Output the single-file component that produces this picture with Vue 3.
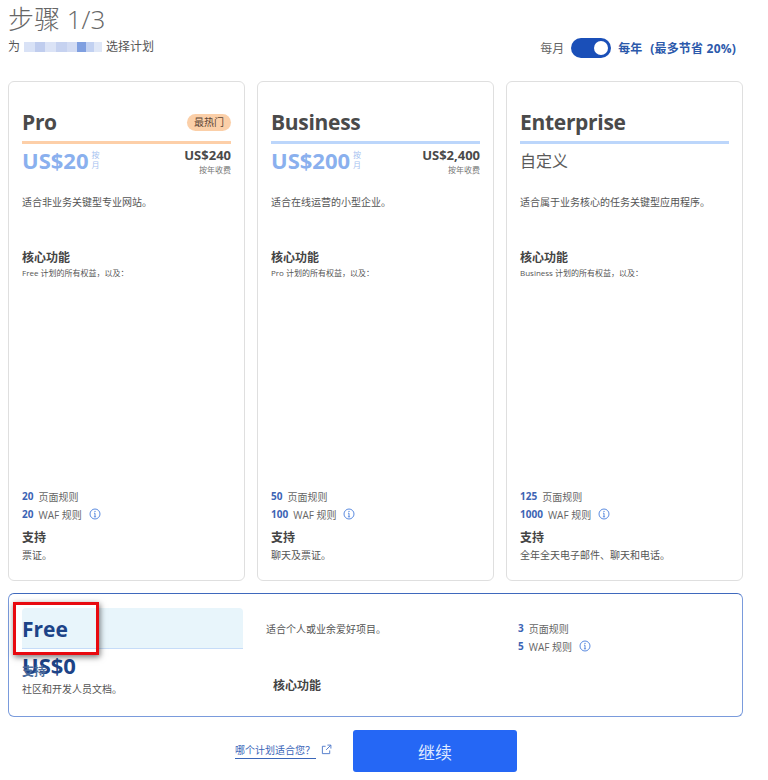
<script setup>
const plans = [
  { name: 'Pro', line: '#fdcfa8', price: 'US$20', year: 'US$240', badge: '最热门', desc: '适合非业务关键型专业网站。', inherit: 'Free 计划的所有权益\uFF0C以及\uFF1A', pages: 20, waf: 20, support: '票证。' },
  { name: 'Business', line: '#bcd6fb', price: 'US$200', year: 'US$2,400', desc: '适合在线运营的小型企业。', inherit: 'Pro 计划的所有权益\uFF0C以及\uFF1A', pages: 50, waf: 100, support: '聊天及票证。' },
  { name: 'Enterprise', line: '#bcd6fb', custom: '自定义', desc: '适合属于业务核心的任务关键型应用程序。', inherit: 'Business 计划的所有权益\uFF0C以及\uFF1A', pages: 125, waf: 1000, support: '全年全天电子邮件、聊天和电话。' }
]
const whichText = '哪个计划适合您\uFF1F'
</script>

<template>
  <div class="page">
    <header class="head">
      <div>
        <h1 class="step">步骤 1/3</h1>
        <div class="for">为 <span class="mask"></span> 选择计划</div>
      </div>
      <div class="billing">
        <span class="month">每月</span>
        <span class="switch"><span class="knob"></span></span>
        <span class="year">每年</span>
        <span class="save">(最多节省 20%)</span>
      </div>
    </header>

    <section class="plans">
      <article v-for="p in plans" :key="p.name" class="card">
        <div class="title-row" :style="{ borderColor: p.line }">
          <h2 class="name">{{ p.name }}</h2>
          <span v-if="p.badge" class="badge">{{ p.badge }}</span>
        </div>
        <div v-if="p.custom" class="custom">{{ p.custom }}</div>
        <div v-else class="price-row">
          <div class="price">{{ p.price }}<span class="per"><span>按</span><span>月</span></span></div>
          <div class="annual"><strong>{{ p.year }}</strong><small>按年收费</small></div>
        </div>
        <p class="desc">{{ p.desc }}</p>
        <h3 class="core">核心功能</h3>
        <p class="inherit">{{ p.inherit }}</p>
        <div class="bottom">
          <div class="rule"><b>{{ p.pages }}</b> 页面规则</div>
          <div class="rule"><b>{{ p.waf }}</b> WAF 规则
            <svg class="info" viewBox="0 0 12 12"><circle cx="6" cy="6" r="5" /><path d="M6 5.2v3.6M4.9 8.8h2.2M5 5.2h1" /><circle class="dot" cx="6" cy="3.4" r=".7" /></svg>
          </div>
          <h3 class="support">支持</h3>
          <p class="support-text">{{ p.support }}</p>
        </div>
      </article>
    </section>

    <section class="free">
      <div class="free-left">
        <h2 class="free-name">Free</h2>
        <div class="free-price">US$0</div>
        <h3 class="free-support">支持</h3>
        <p class="support-text">社区和开发人员文档。</p>
      </div>
      <div class="free-mid">
        <p class="free-desc">适合个人或业余爱好项目。</p>
        <h3 class="free-core">核心功能</h3>
      </div>
      <div class="free-right">
        <div class="rule"><b>3</b> 页面规则</div>
        <div class="rule"><b>5</b> WAF 规则
          <svg class="info" viewBox="0 0 12 12"><circle cx="6" cy="6" r="5" /><path d="M6 5.2v3.6M4.9 8.8h2.2M5 5.2h1" /><circle class="dot" cx="6" cy="3.4" r=".7" /></svg>
        </div>
      </div>
      <div class="marker"></div>
    </section>

    <footer class="foot">
      <a class="which">{{ whichText }}</a>
      <svg class="ext" viewBox="0 0 12 12"><path d="M5 2.5H1.5v8h8V7M7 1.2h3.8V5M10.6 1.4 5.6 6.4" /></svg>
      <button class="go">继续</button>
    </footer>
  </div>
</template>

<style>
body { margin: 0; background: #fff; }
</style>

<style scoped>
.page {
  width: 768px;
  height: 780px;
  box-sizing: border-box;
  padding: 0 25px 0 8px;
  overflow: hidden;
  font-family: "Open Sans", "Noto Sans CJK SC", sans-serif;
  color: #4a4a4a;
}
h1, h2, h3, p { margin: 0; }
.head { display: flex; justify-content: space-between; height: 81px; }
.step { font-size: 26px; line-height: 36px; font-weight: 300; color: #666; padding-top: 1px; }
.for { display: flex; align-items: center; gap: 4px; font-size: 12px; line-height: 14px; color: #555; margin-top: 3px; }
.mask {
  width: 78px;
  height: 10px;
  background: linear-gradient(90deg, #d9e2f6 0 14%, #c0cdee 14% 27%, #dbe3f6 27% 41%, #c6d2f0 41% 55%, #d3dcf3 55% 68%, #7f9fe0 68% 80%, #c2d1f1 80% 90%, #dfe7f7 90% 100%);
}
.billing { display: flex; align-items: center; gap: 5px; height: 20px; margin: 38px 7px 0 0; font-size: 12px; font-weight: 700; color: #2c59ab; }
.month { font-weight: 400; color: #666; margin-right: 2px; }
.switch { width: 40px; height: 20px; border-radius: 10px; background: #1a4fb8; position: relative; margin-right: 2px; }
.knob { position: absolute; right: 3px; top: 3px; width: 14px; height: 14px; border-radius: 50%; background: #fff; }
.save { margin-left: 3px; letter-spacing: .2px; }
.plans { display: grid; grid-template-columns: repeat(3, 237px); gap: 12px; }
.card {
  height: 500px;
  box-sizing: border-box;
  border: 1px solid #dfdfdf;
  border-radius: 6px;
  padding: 21px 13px 18px;
  display: flex;
  flex-direction: column;
}
.title-row { display: flex; justify-content: space-between; align-items: center; height: 38px; border-bottom: 3px solid; }
.name { font-size: 21px; line-height: 38px; font-weight: 700; letter-spacing: -.3px; color: #4a4a4a; }
.badge { background: #fbcfa8; border-radius: 9px; font-size: 10px; line-height: 17px; padding: 0 7px; color: #5c4636; }
.price-row { display: flex; justify-content: space-between; height: 44px; }
.price { display: flex; align-items: center; height: 32px; font-size: 22px; font-weight: 700; color: #8ab0ee; }
.per { display: flex; flex-direction: column; font-size: 8px; line-height: 10px; font-weight: 400; margin-left: 3px; color: #a6c2f0; }
.annual { display: flex; flex-direction: column; align-items: flex-end; padding-top: 3px; }
.annual strong { font-size: 13px; line-height: 16px; color: #4a4a4a; }
.annual small { font-size: 8px; line-height: 14px; color: #777; }
.custom { height: 44px; font-size: 16px; line-height: 34px; color: #5a5a5a; }
.desc { font-size: 10px; line-height: 14px; color: #555; margin-top: 7px; }
.core { font-size: 12px; line-height: 16px; font-weight: 700; color: #444; margin-top: 41px; }
.inherit { font-size: 8px; line-height: 13px; color: #555; }
.bottom { margin-top: auto; }
.rule { display: flex; align-items: center; gap: 5px; height: 18px; font-size: 10px; color: #666; }
.rule b { color: #3c64b4; font-weight: 700; }
.info { width: 12px; height: 12px; margin-left: 2px; fill: none; stroke: #5b8be0; stroke-width: 1; }
.dot { fill: #5b8be0; stroke: none; }
.support { font-size: 12px; line-height: 16px; font-weight: 700; color: #444; margin-top: 7px; }
.support-text { font-size: 10px; line-height: 14px; color: #555; margin-top: 2px; }
.free {
  position: relative;
  width: 735px;
  height: 124px;
  margin-top: 12px;
  box-sizing: border-box;
  border: 1px solid #7a9bdc;
  border-top-color: #3f69bd;
  border-radius: 6px;
  display: grid;
  grid-template-columns: 221px 229px 1fr;
  column-gap: 23px;
  padding: 14px 0 0 13px;
}
.free-name { height: 41px; box-sizing: border-box; border-bottom: 1px solid #c6dcf8; background: #e8f5fb; border-radius: 4px 4px 0 0; font-size: 21px; line-height: 42px; font-weight: 700; color: #1d4488; }
.free-price { font-size: 22px; line-height: 30px; font-weight: 700; color: #1d4488; margin-top: 1px; }
.free-support { font-size: 12px; line-height: 16px; font-weight: 700; color: #4a6a9a; margin-top: -16px; }
.free-desc { font-size: 10px; line-height: 14px; color: #555; margin-top: 14px; }
.free-core { font-size: 12px; line-height: 16px; font-weight: 700; color: #444; margin: 42px 0 0 7px; }
.free-right { padding-top: 11px; }
.marker {
  position: absolute;
  left: 4px;
  top: 8px;
  width: 86px;
  height: 53px;
  box-sizing: border-box;
  border: 3px solid #e8090f;
  box-shadow: 1px 2px 6px rgba(0, 0, 0, .55);
}
.foot { display: flex; align-items: center; height: 42px; margin-top: 13px; }
.which { margin-left: 227px; width: 81px; font-size: 10px; line-height: 14px; color: #3a66b8; border-bottom: 1px solid #3a66b8; padding-bottom: 1px; white-space: nowrap; }
.ext { width: 11px; height: 11px; margin: 0 0 4px 5px; fill: none; stroke: #4a76c8; stroke-width: 1; }
.go { width: 164px; height: 42px; margin-left: 21px; border: 0; border-radius: 3px; background: #2567f5; color: #dfe9ff; font-family: inherit; font-size: 17px; }
</style>
